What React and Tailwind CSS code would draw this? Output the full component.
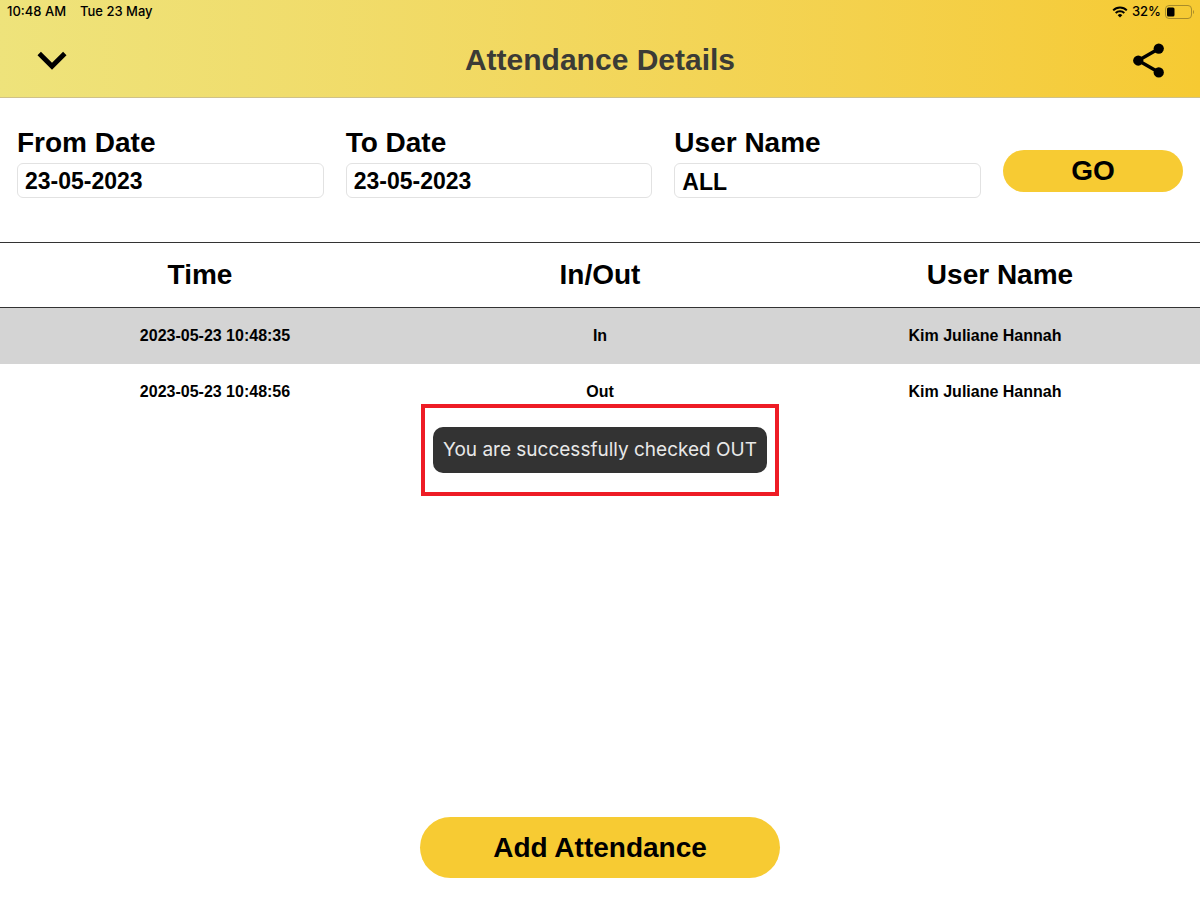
// src/pages/AttendanceDetails.jsx
import React, { useState } from "react";
import { MdExpandMore } from "react-icons/md";

const records = [
  { time: "2023-05-23 10:48:35", type: "In", user: "Kim Juliane Hannah" },
  { time: "2023-05-23 10:48:56", type: "Out", user: "Kim Juliane Hannah" },
];

const labelClass = "block text-[28px] leading-8 font-bold";
const fieldClass =
  "mt-1 block w-full h-[35px] rounded-md border border-[#e2e2e2] bg-white px-[7px] pt-0.5 text-[23px] leading-8 font-bold text-black appearance-none";

const WifiIcon = () => (
  <svg viewBox="0 0 16 12" className="w-4 h-3" fill="none" stroke="black">
    <path d="M1.2 4.4a9.6 9.6 0 0 1 13.6 0" strokeWidth="2" />
    <path d="M3.7 7a6.1 6.1 0 0 1 8.6 0" strokeWidth="2" />
    <path d="M8 11.6 5.7 9.2a3.3 3.3 0 0 1 4.6 0z" fill="black" stroke="none" />
  </svg>
);

const BatteryIcon = () => (
  <svg viewBox="0 0 30 14" className="w-[30px] h-3.5" fill="none">
    <rect x="0.5" y="0.5" width="26" height="13" rx="3.5" stroke="#a98c2a" />
    <rect x="2" y="2.5" width="7.5" height="9" rx="1.5" fill="black" />
    <path d="M28 5v4c1.4-.6 1.4-3.4 0-4z" fill="#a98c2a" />
  </svg>
);

const ShareIcon = () => (
  <svg viewBox="0 0 24 24" className="size-[41px]" fill="black">
    <path d="M18 5.1 6 12l12 6.9" fill="none" stroke="black" strokeWidth="2" />
    <circle cx="18" cy="5" r="3" />
    <circle cx="6" cy="12" r="3" />
    <circle cx="18" cy="19" r="3" />
  </svg>
);

const AttendanceDetails = () => {
  const [fromDate, setFromDate] = useState("23-05-2023");
  const [toDate, setToDate] = useState("23-05-2023");
  const [userName, setUserName] = useState("ALL");

  return (
    <div className="min-h-screen w-full flex flex-col bg-white text-black font-['Liberation_Sans',Arial,sans-serif]">
      {/* HEADER */}
      <header className="bg-linear-to-r from-[#eee37b] to-[#f6ca32] border-b border-[#cfc189]">
        <div className="flex items-center justify-between h-[23px] pl-[7px] pr-[5px] text-[13px] font-medium font-['Inter',sans-serif]">
          <div className="flex gap-3.5">
            <span>10:48 AM</span>
            <span>Tue 23 May</span>
          </div>
          <div className="flex items-center gap-1">
            <WifiIcon />
            <span>32%</span>
            <BatteryIcon />
          </div>
        </div>

        <div className="grid grid-cols-[80px_1fr_80px] items-center h-[74px] px-3">
          <button type="button" aria-label="Back" className="w-20 flex justify-center">
            <MdExpandMore className="size-[58px]" />
          </button>
          <h1 className="text-center text-[30px] leading-9 font-bold text-[#3b3b36]">
            Attendance Details
          </h1>
          <button type="button" aria-label="Share" className="w-20 flex justify-center">
            <ShareIcon />
          </button>
        </div>
      </header>

      {/* FILTERS */}
      <form
        onSubmit={(e) => e.preventDefault()}
        className="flex items-center gap-[22px] px-[17px] pt-[29px] pb-11"
      >
        <div className="flex-1">
          <label htmlFor="from" className={labelClass}>
            From Date
          </label>
          <input
            id="from"
            type="text"
            value={fromDate}
            onChange={(e) => setFromDate(e.target.value)}
            className={fieldClass}
          />
        </div>
        <div className="flex-1">
          <label htmlFor="to" className={labelClass}>
            To Date
          </label>
          <input
            id="to"
            type="text"
            value={toDate}
            onChange={(e) => setToDate(e.target.value)}
            className={fieldClass}
          />
        </div>
        <div className="flex-1">
          <label htmlFor="user" className={labelClass}>
            User Name
          </label>
          <select
            id="user"
            value={userName}
            onChange={(e) => setUserName(e.target.value)}
            className={fieldClass}
          >
            <option>ALL</option>
            <option>Kim Juliane Hannah</option>
          </select>
        </div>
        <button
          type="submit"
          className="w-[180px] h-[42px] mt-4 rounded-full bg-[#f7cb33] text-[28px] leading-8 font-bold"
        >
          GO
        </button>
      </form>

      {/* RECORDS */}
      <main className="flex-1">
        <table className="w-full table-fixed border-collapse text-center">
          <thead>
            <tr className="h-[65px] border-y border-[#333] text-[28px] leading-8">
              <th>Time</th>
              <th>In/Out</th>
              <th>User Name</th>
            </tr>
          </thead>
          <tbody className="text-base font-bold">
            {records.map((r) => (
              <tr key={r.time} className="h-14 odd:bg-[#d4d4d4]">
                <td className="pl-[30px]">{r.time}</td>
                <td>{r.type}</td>
                <td className="pr-[30px]">{r.user}</td>
              </tr>
            ))}
          </tbody>
        </table>
      </main>

      <footer className="flex justify-center pb-[22px]">
        <button
          type="button"
          className="w-[30%] h-[61px] rounded-full bg-[#f7cb33] text-[28px] leading-8 font-bold"
        >
          Add Attendance
        </button>
      </footer>

      {/* TOAST */}
      <div className="fixed inset-0 flex items-center justify-center pointer-events-none">
        <div className="border-4 border-[#ee1c25] px-2 py-[19px]">
          <p
            role="status"
            className="rounded-[10px] bg-[#333] px-2.5 py-2 text-[19px] leading-[30px] text-[#e8e8e8] font-['Inter',sans-serif]"
          >
            You are successfully checked OUT
          </p>
        </div>
      </div>
    </div>
  );
};

const App = () => <AttendanceDetails />;

export default App;
